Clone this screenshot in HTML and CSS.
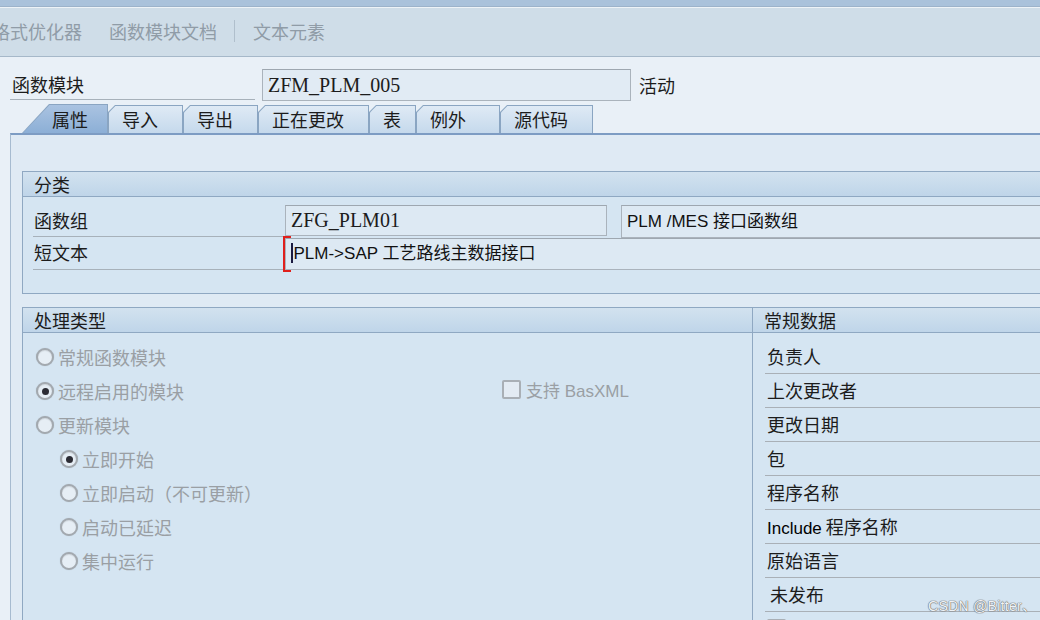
FILE: index.html
```html
<!DOCTYPE html>
<html lang="zh-CN">
<head>
  <meta charset="UTF-8">
  <title>函数模块</title>
  <link rel="stylesheet" href="styles.css">
</head>
<body>
  <div class="app">
    <div class="titlebar"></div>
    <div class="toolbar">
      <span class="tool tool-cut">格式优化器</span>
      <span class="tool">函数模块文档</span>
      <span class="tool-sep"></span>
      <span class="tool tool-after-sep">文本元素</span>
    </div>

    <div class="screen">
      <div class="fm-row">
        <div class="fm-label">函数模块</div>
        <div class="field field-fm">ZFM_PLM_005</div>
        <div class="fm-status">活动</div>
      </div>

      <div class="tabs">
        <div class="tab active"><div class="tab-face">属性</div></div>
        <div class="tab"><div class="tab-face">导入</div></div>
        <div class="tab"><div class="tab-face">导出</div></div>
        <div class="tab"><div class="tab-face">正在更改</div></div>
        <div class="tab"><div class="tab-face">表</div></div>
        <div class="tab"><div class="tab-face">例外</div></div>
        <div class="tab"><div class="tab-face">源代码</div></div>
      </div>

      <div class="tab-panel">
        <!-- 分类 -->
        <div class="group group-class">
          <div class="group-head">分类</div>
          <div class="group-body class-body">
            <div class="form-row row-first">
              <div class="form-label">函数组</div>
              <div class="field field-group">ZFG_PLM01</div>
              <div class="field field-desc">PLM /MES 接口函数组</div>
            </div>
            <div class="form-row row-second">
              <div class="form-label">短文本</div>
              <div class="field field-short">
                <span class="focus-mark"></span><span class="caret"></span>PLM-&gt;SAP 工艺路线主数据接口
              </div>
            </div>
          </div>
        </div>

        <div class="split">
          <!-- 处理类型 -->
          <div class="group group-proc">
            <div class="group-head">处理类型</div>
            <div class="group-body proc-body">
              <div class="radios">
                <div class="radio-row"><span class="radio"></span>常规函数模块</div>
                <div class="radio-row"><span class="radio checked"></span>远程启用的模块</div>
                <div class="radio-row"><span class="radio"></span>更新模块</div>
                <div class="radio-row sub"><span class="radio checked"></span>立即开始</div>
                <div class="radio-row sub"><span class="radio"></span>立即启动（不可更新）</div>
                <div class="radio-row sub"><span class="radio"></span>启动已延迟</div>
                <div class="radio-row sub"><span class="radio"></span>集中运行</div>
              </div>
              <div class="checks">
                <div class="check-row"><span class="checkbox"></span>支持 BasXML</div>
              </div>
            </div>
          </div>

          <!-- 常规数据 -->
          <div class="group group-general">
            <div class="group-head">常规数据</div>
            <div class="group-body general-body">
              <div class="data-row">负责人</div>
              <div class="data-row">上次更改者</div>
              <div class="data-row">更改日期</div>
              <div class="data-row">包</div>
              <div class="data-row">程序名称</div>
              <div class="data-row"><span class="latin">Include</span> 程序名称</div>
              <div class="data-row">原始语言</div>
              <div class="data-row indent">未发布</div>
              <div class="data-row"><span class="checkbox small"></span></div>
            </div>
          </div>
        </div>
      </div>
    </div>

    <div class="watermark">CSDN @Bitter、</div>
  </div>
</body>
</html>
```

FILE: styles.css
```css
* {
  box-sizing: border-box;
}

html, body {
  margin: 0;
  padding: 0;
}

body {
  width: 1040px;
  height: 620px;
  overflow: hidden;
  background-color: #e9f0f7;
  font-family: "Noto Sans CJK SC", sans-serif;
  font-size: 18px;
  color: #1c1c1c;
}

.app {
  position: relative;
  width: 1040px;
  height: 620px;
  overflow: hidden;
}

/* Top band + toolbar */
.titlebar {
  height: 7px;
  background-color: #aac2db;
  border-bottom: 1px solid #9db3ca;
}

.toolbar {
  display: flex;
  align-items: center;
  height: 50px;
  padding-bottom: 2px;
  background-color: #cfdde8;
  border-top: 1px solid #eef3f7;
  border-bottom: 1px solid #a6b8c9;
  color: #909ca7;
  white-space: nowrap;
}

.tool {
  line-height: 24px;
}

.tool-cut {
  margin-left: -8px;
}

.tool + .tool {
  margin-left: 27px;
}

.tool-sep {
  width: 1px;
  height: 22px;
  background-color: #b0bfcc;
  margin: 0 18px 0 17px;
}

/* Function module row */
.screen {
  padding-top: 12px;
}

.fm-row {
  display: flex;
  align-items: flex-start;
  height: 32px;
}

.fm-label {
  width: 245px;
  height: 31px;
  margin-left: 10px;
  padding-left: 2px;
  border-bottom: 1px solid #a7b1ba;
  line-height: 30px;
}

.field {
  background-color: #dde9f3;
  border: 1px solid #aab3bc;
  border-top-color: #9ea7b0;
  white-space: nowrap;
  overflow: hidden;
}

.field-fm {
  width: 369px;
  height: 32px;
  margin-left: 7px;
  padding-left: 5px;
  background-color: #e1ebf4;
  font-family: "Liberation Serif", serif;
  font-size: 20px;
  line-height: 30px;
}

.fm-status {
  margin-left: 8px;
  line-height: 32px;
}

/* Tabs */
.tabs {
  display: flex;
  align-items: flex-end;
  height: 29px;
  margin: 3px 0 0 22px;
}

.tab {
  height: 28px;
  padding: 1px 1px 0 1px;
  background-color: #8aa5c2;
  clip-path: polygon(7px 0, 100% 0, 100% 100%, 0 100%, 0 7px);
}

.tab-face {
  height: 100%;
  padding-left: 13px;
  background: linear-gradient(#dfeaf5, #c5d9ec);
  clip-path: polygon(6.4px 0, 100% 0, 100% 100%, 0 100%, 0 6.4px);
  line-height: 26px;
  white-space: nowrap;
}

.tab.active {
  height: 29px;
  width: 86px;
  clip-path: polygon(27px 0, 100% 0, 100% 100%, 0 100%);
}

.tab.active .tab-face {
  padding-left: 29px;
  background: linear-gradient(#aac3e1, #8cafd6);
  clip-path: polygon(26.5px 0, 100% 0, 100% 100%, 0 100%);
  line-height: 28px;
}

.tab:nth-child(2) { width: 75px; }
.tab:nth-child(3) { width: 75px; }
.tab:nth-child(4) { width: 111px; }
.tab:nth-child(5) { width: 47px; }
.tab:nth-child(6) { width: 84px; }
.tab:nth-child(7) { width: 93px; }

/* Tab panel */
.tab-panel {
  width: 1060px;
  height: 500px;
  margin-left: 10px;
  padding: 36px 0 0 11px;
  background-color: #dfeaf4;
  border-top: 2px solid #7d9cc3;
  border-left: 1px solid #a6bbd0;
}

.group {
  border: 1px solid #8fa8c2;
  background-color: #d5e5f2;
}

.group-head {
  height: 25px;
  padding-left: 11px;
  background: linear-gradient(#d2e2ef, #bfd5e9);
  border-bottom: 1px solid #8fa8c2;
  line-height: 24px;
}

/* 分类 */
.class-body {
  padding: 8px 0 23px 10px;
}

.form-row {
  display: flex;
  align-items: flex-start;
}

.row-first {
  height: 32px;
}

.row-second {
  height: 33px;
}

.form-label {
  width: 252px;
  height: 100%;
  padding-left: 1px;
  border-bottom: 1px solid #a7b1ba;
  line-height: 31px;
}

.field-group {
  width: 322px;
  height: 31px;
  padding-left: 5px;
  font-family: "Liberation Serif", serif;
  font-size: 20px;
  line-height: 29px;
}

.field-desc {
  flex: 1;
  height: 33px;
  margin-left: 14px;
  padding-left: 5px;
  font-family: "Liberation Sans", "Noto Sans CJK SC", sans-serif;
  font-size: 17px;
  line-height: 31px;
  color: #111;
}

.field-short {
  position: relative;
  flex: 1;
  height: 32px;
  margin-top: 1px;
  padding-left: 5px;
  overflow: visible;
  font-family: "Liberation Sans", "Noto Sans CJK SC", sans-serif;
  font-size: 17px;
  line-height: 30px;
  color: #111;
}

.focus-mark {
  position: absolute;
  left: -3px;
  top: -3px;
  bottom: -3px;
  width: 8px;
  border: 2px solid #e0201c;
  border-right: none;
}

.caret {
  display: inline-block;
  width: 1.5px;
  height: 20px;
  margin-right: 1px;
  vertical-align: -4px;
  background-color: #1a1a40;
}

/* Lower groups */
.split {
  display: flex;
  margin-top: 13px;
  height: 400px;
}

.group-proc {
  width: 731px;
}

.group-general {
  flex: 1;
  border-left: none;
}

.proc-body {
  display: grid;
  grid-template-columns: 466px auto;
  height: 100%;
  padding: 7px 0 0 13px;
}

.radio-row,
.check-row {
  display: flex;
  align-items: center;
  height: 34px;
  color: #9a9fa4;
  white-space: nowrap;
}

.radio-row.sub {
  margin-left: 24px;
}

.radio {
  display: flex;
  align-items: center;
  justify-content: center;
  width: 18px;
  height: 18px;
  margin-right: 4px;
  border: 2px solid #a3a9af;
  border-radius: 50%;
  background-color: #e6eef5;
  box-shadow: inset 0 1px 1px rgba(0, 0, 0, 0.1), 0 0 1px rgba(0, 0, 0, 0.2);
}

.radio.checked::after {
  content: "";
  width: 7px;
  height: 7px;
  border-radius: 50%;
  background-color: #2c2c34;
}

.checks {
  padding-top: 32px;
}

.check-row {
  font-family: "Liberation Sans", "Noto Sans CJK SC", sans-serif;
  font-size: 17px;
}

.checkbox {
  display: inline-block;
  width: 19px;
  height: 19px;
  margin-right: 5px;
  border: 2px solid #a9afb5;
  border-radius: 2px;
  background-color: #e3ebf3;
}

.checkbox.small {
  margin: 7px 0 0 0;
}

/* 常规数据 */
.general-body {
  padding: 7px 0 0 12px;
}

.data-row {
  height: 34px;
  padding-left: 2px;
  border-bottom: 1px solid #a9b0b7;
  line-height: 32px;
  white-space: nowrap;
}

.data-row.indent {
  padding-left: 5px;
}

.latin {
  font-family: "Liberation Sans", sans-serif;
  font-size: 17px;
  color: #000;
}

.watermark {
  position: absolute;
  left: 928px;
  top: 595px;
  font-family: "Liberation Sans", sans-serif;
  font-size: 14px;
  letter-spacing: 0.3px;
  color: #eef2f6;
  text-shadow: 0 0 1px #6f6f6f, 0 0 1px #6f6f6f, 0 0 1px #6f6f6f;
}
```
